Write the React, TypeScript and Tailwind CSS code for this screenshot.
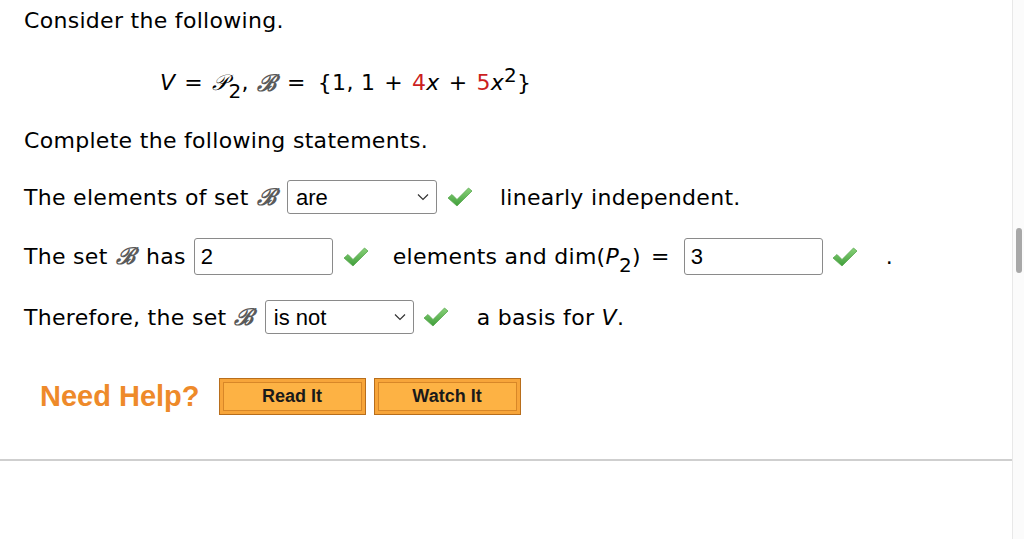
import React from 'react';

const font = { fontFamily: '"DejaVu Sans", Verdana, sans-serif', letterSpacing: '0.3px' };

const CalB: React.FC = () => (
  <span
    className="ml-[8px] mr-[11px] text-[23px] font-bold italic text-[#5a5a5a]"
    style={{ fontFamily: '"DejaVu Serif", serif' }}
  >
    ℬ
  </span>
);

const Check: React.FC = () => (
  <svg width="26" height="22" viewBox="0 0 26 22" className="shrink-0">
    <defs>
      <linearGradient id="chk" x1="0" y1="0" x2="0" y2="1">
        <stop offset="0" stopColor="#8ad27a" />
        <stop offset="1" stopColor="#3f9e3a" />
      </linearGradient>
    </defs>
    <path
      d="M1 12 L5 8.5 L10 13.5 L21.5 2 L25 5 L10 20 Z"
      fill="url(#chk)"
      stroke="#5aa850"
      strokeWidth="0.8"
      strokeLinejoin="round"
    />
  </svg>
);

const Chevron: React.FC = () => (
  <svg width="12" height="8" viewBox="0 0 12 8" className="shrink-0">
    <path d="M1 1.5 L6 6.5 L11 1.5" fill="none" stroke="#333" strokeWidth="1.2" />
  </svg>
);

const SelectBox: React.FC<{ value: string; width: string }> = ({ value, width }) => (
  <div
    className={`flex h-[34px] items-center justify-between rounded-[3px] border border-[#8a8a8a] pl-[8px] pr-[7px] text-[22px] tracking-normal text-black ${width}`}
    style={{ fontFamily: '"Liberation Sans", Arial, sans-serif' }}
  >
    <span>{value}</span>
    <Chevron />
  </div>
);

const InputBox: React.FC<{ value: string }> = ({ value }) => (
  <div
    className="flex h-[37px] w-[139px] items-center rounded-[3px] border border-[#8a8a8a] pl-[6px] text-[22px] tracking-normal text-black"
    style={{ fontFamily: '"Liberation Sans", Arial, sans-serif' }}
  >
    {value}
  </div>
);

const HelpButton: React.FC<{ label: string }> = ({ label }) => (
  <div className="h-[37px] w-[147px] border border-[#b86e1c] bg-[#f7a53a] p-[3px]">
    <div
      className="flex h-full w-full items-center justify-center border border-[#d88728] bg-[#fdb244] text-[18px] font-bold tracking-normal text-[#1a1a1a]"
      style={{ fontFamily: '"Liberation Sans", Arial, sans-serif' }}
    >
      {label}
    </div>
  </div>
);

const App: React.FC = () => {
  return (
    <div className="flex h-[539px] w-[1024px] overflow-hidden bg-white text-black" style={font}>
      <div className="flex-1">
        <div className="px-6 pt-[7px] text-[22px]">
          <p className="leading-[28px]">Consider the following.</p>

          {/* Math line */}
          <div className="mt-[34px] flex items-center pl-[136px] leading-[28px]">
            <span className="italic">V</span>
            <span className="mx-[9px]">=</span>
            <span className="italic" style={{ fontFamily: '"DejaVu Serif", serif' }}>
              𝒫
            </span>
            <span className="relative top-[8px] text-[20px]">2</span>
            <span>,</span>
            <CalB />
            <span className="mr-[12px]">=</span>
            <span>{'{1, 1'}</span>
            <span className="mx-[9px]">+</span>
            <span className="text-[#cc1f1f]">4</span>
            <span className="italic">x</span>
            <span className="mx-[9px]">+</span>
            <span className="text-[#cc1f1f]">5</span>
            <span className="italic">x</span>
            <span className="relative -top-[8px] text-[20px]">2</span>
            <span>{'}'}</span>
          </div>

          <p className="mt-[30px] leading-[28px]">Complete the following statements.</p>

          {/* Row 1 */}
          <div className="mt-[25px] flex h-[34px] items-center">
            <span>The elements of set</span>
            <CalB />
            <SelectBox value="are" width="w-[150px]" />
            <span className="ml-[10px] mr-[27px]">
              <Check />
            </span>
            <span>linearly independent.</span>
          </div>

          {/* Row 2 */}
          <div className="mt-[24px] flex h-[37px] items-center">
            <span>The set</span>
            <CalB />
            <span className="mr-[8px]">has</span>
            <InputBox value="2" />
            <span className="ml-[10px] mr-[24px]">
              <Check />
            </span>
            <span>elements and dim(</span>
            <span className="italic">P</span>
            <span className="relative top-[8px] text-[20px]">2</span>
            <span>)</span>
            <span className="ml-[10px] mr-[14px]">=</span>
            <InputBox value="3" />
            <span className="ml-[9px] mr-[28px]">
              <Check />
            </span>
            <span>.</span>
          </div>

          {/* Row 3 */}
          <div className="mt-[25px] flex h-[34px] items-center">
            <span>Therefore, the set</span>
            <CalB />
            <SelectBox value="is not" width="w-[149px]" />
            <span className="ml-[9px] mr-[28px]">
              <Check />
            </span>
            <span>
              a basis for <span className="italic">V</span>.
            </span>
          </div>

          {/* Need help */}
          <div className="mt-[41px] flex items-center pl-[16px]">
            <span
              className="mr-[19px] text-[29px] font-bold tracking-normal text-[#ee8a2a]"
              style={{ fontFamily: '"Liberation Sans", Arial, sans-serif' }}
            >
              Need Help?
            </span>
            <div className="flex gap-[8px]">
              <HelpButton label="Read It" />
              <HelpButton label="Watch It" />
            </div>
          </div>
        </div>

        <div className="mt-[40px] h-[2px] w-full bg-[#cfcfcf]" />
      </div>

      {/* Scrollbar */}
      <div className="flex w-[12px] flex-col items-center border-l border-[#e8e8e8] bg-[#fbfbfb] pt-[228px]">
        <div className="h-[45px] w-[6px] rounded-full bg-[#a8a8a8]" />
      </div>
    </div>
  );
};

export default App;
